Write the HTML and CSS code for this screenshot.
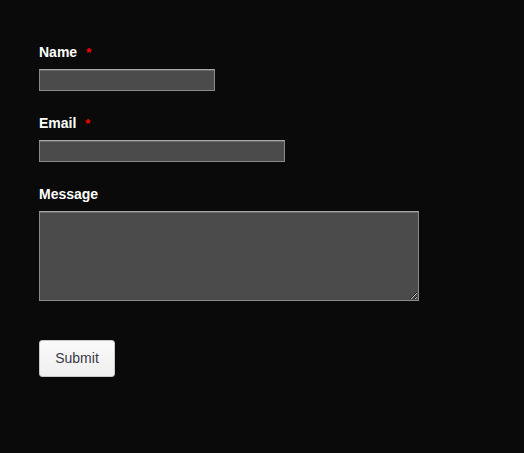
FILE: index.html
```html
<!DOCTYPE html>
<html>
<head>
<meta charset="utf-8">
<link rel="stylesheet" href="styles.css">
</head>
<body>
<form class="form">
  <div class="field">
    <label class="label">Name<span class="req">*</span></label>
    <input class="input input-name" type="text">
  </div>
  <div class="field">
    <label class="label">Email<span class="req">*</span></label>
    <input class="input input-email" type="text">
  </div>
  <div class="field">
    <label class="label">Message</label>
    <textarea class="input textarea"></textarea>
  </div>
  <div class="actions">
    <button class="submit" type="button">Submit</button>
  </div>
</form>
</body>
</html>
```

FILE: styles.css
```css
html, body {
  margin: 0;
  padding: 0;
  background: #0a0a0a;
  height: 100%;
}
.form {
  padding: 44px 0 0 39px;
  font-family: "Liberation Sans", Arial, sans-serif;
}
.field {
  display: flex;
  flex-direction: column;
  align-items: flex-start;
  margin-bottom: 24px;
}
.label {
  display: block;
  color: #ffffff;
  font-weight: bold;
  font-size: 14px;
  line-height: 17px;
  margin-bottom: 8px;
}
.req {
  color: #ff0000;
  margin-left: 9px;
  font-size: 13px;
}
.input {
  box-sizing: border-box;
  margin: 0;
  padding: 2px 4px;
  background: #4b4b4b;
  border: 1px solid #8a8a8a;
  border-top-color: #a8a8a8;
  box-shadow: inset 0 1px 0 #6a6a6a;
  color: #fff;
  font-family: "Liberation Sans", Arial, sans-serif;
  font-size: 13px;
  border-radius: 0;
  outline: none;
}
.input-name {
  width: 176px;
  height: 22px;
}
.input-email {
  width: 246px;
  height: 22px;
}
.textarea {
  display: block;
  width: 380px;
  height: 90px;
  resize: both;
}
.actions {
  padding-top: 15px;
}
.submit {
  box-sizing: border-box;
  width: 76px;
  height: 37px;
  padding: 0 0 2px;
  background: linear-gradient(#fafafa, #efefef);
  border: 1px solid #c8c8c8;
  border-radius: 3px;
  color: #3a3a48;
  font-family: "Liberation Sans", Arial, sans-serif;
  font-size: 14px;
}
```
